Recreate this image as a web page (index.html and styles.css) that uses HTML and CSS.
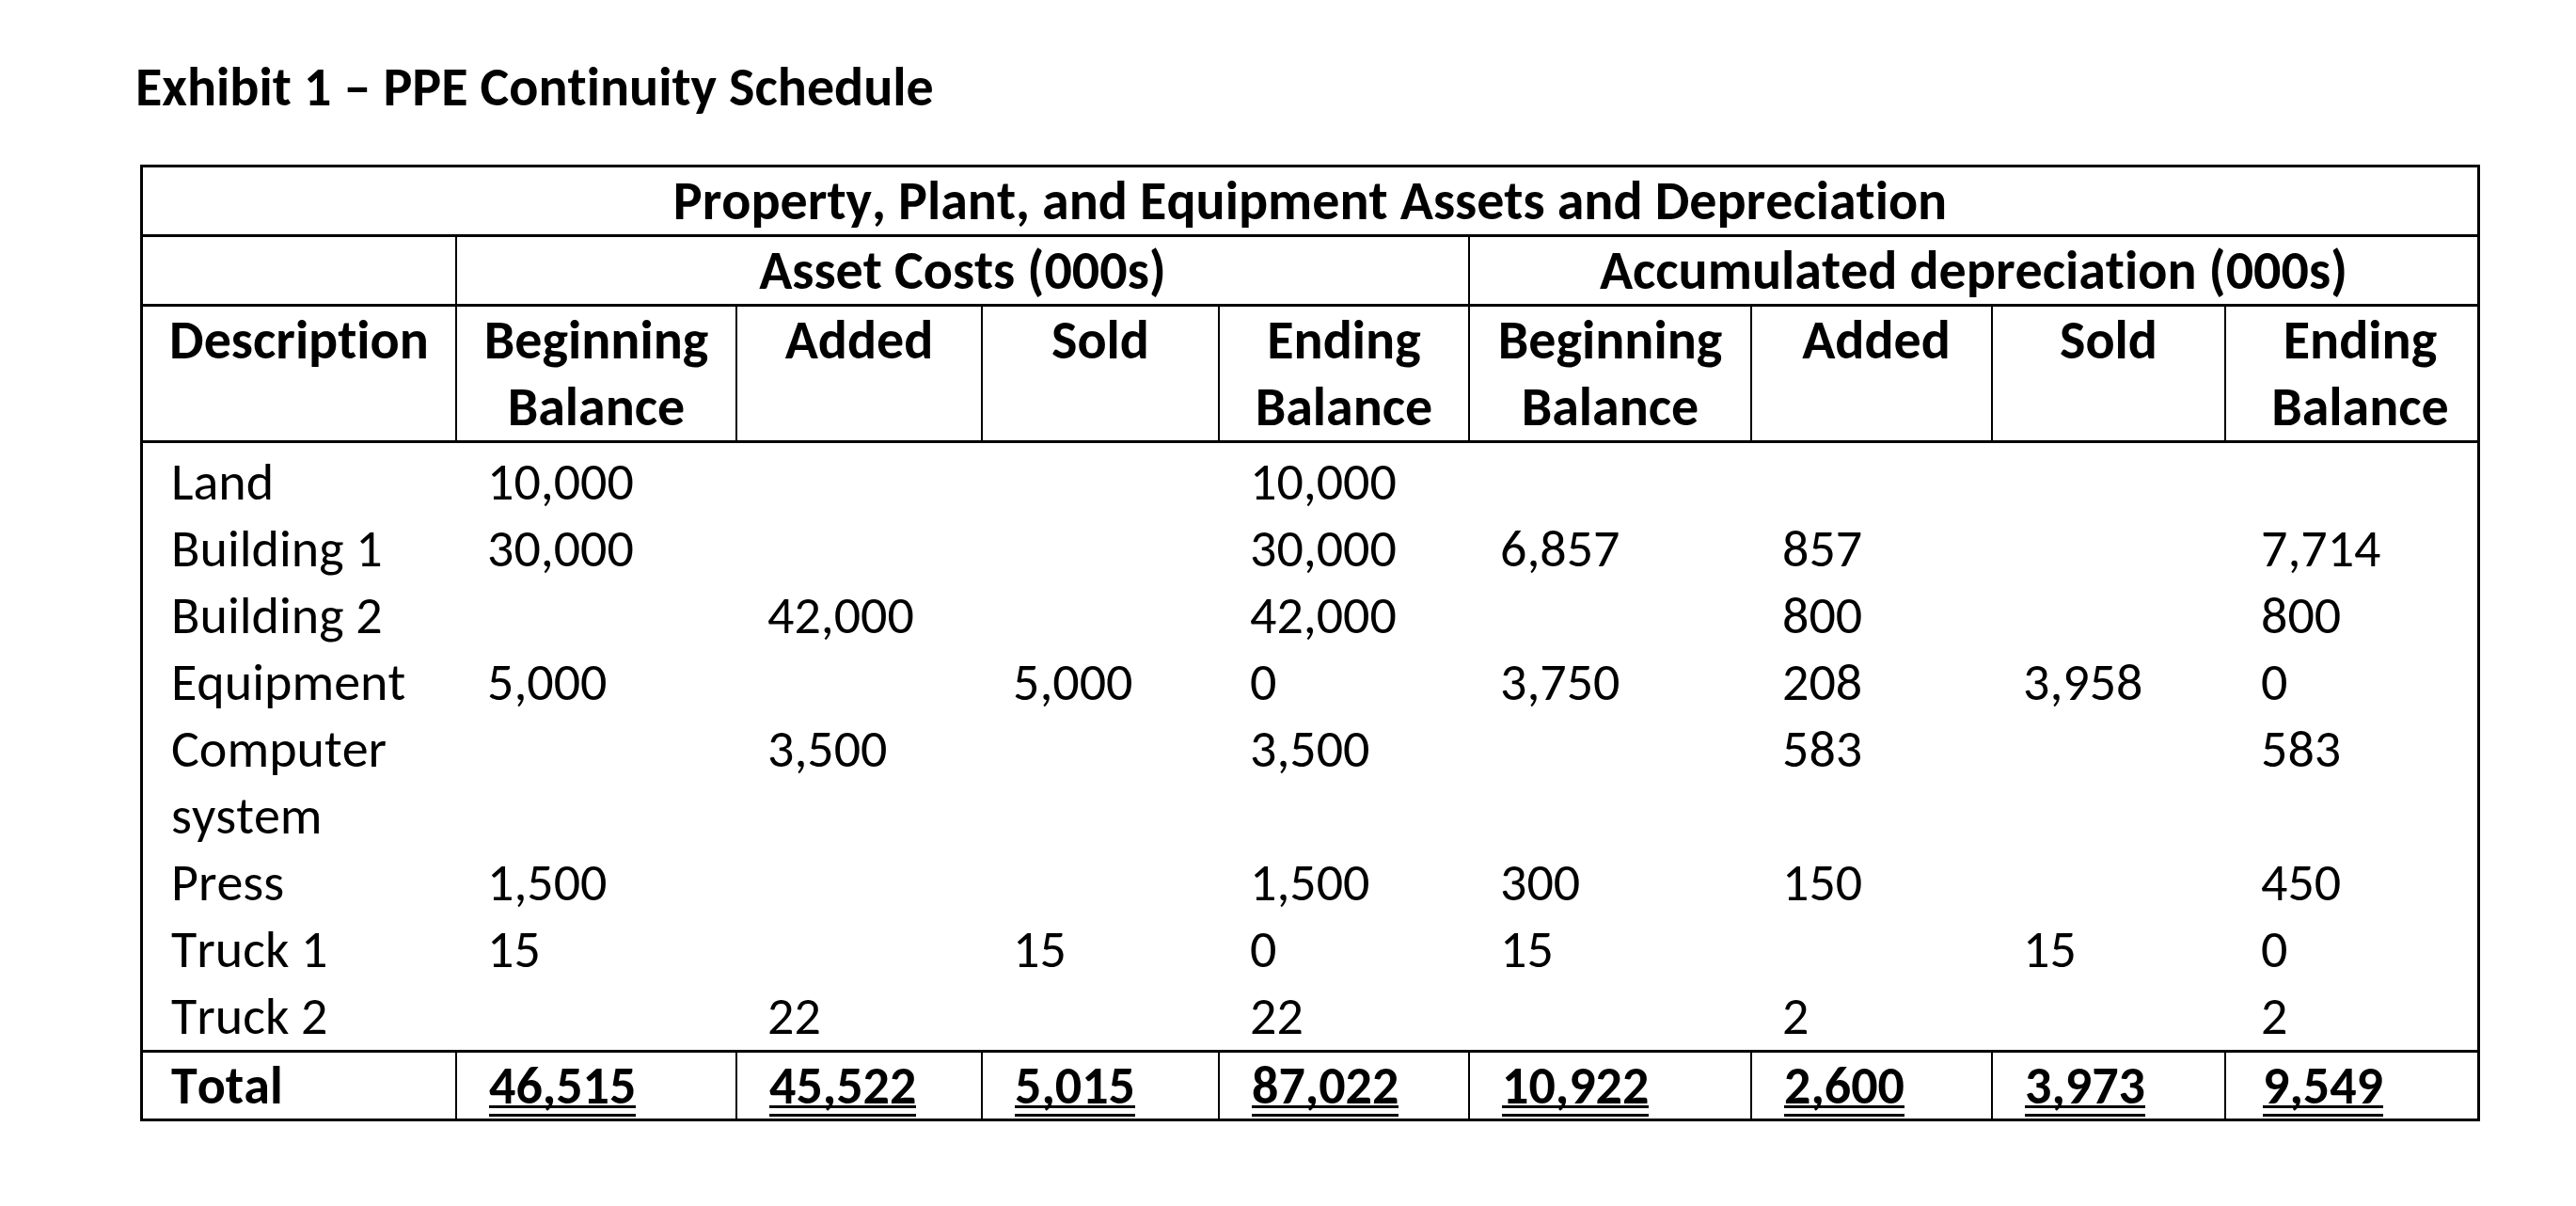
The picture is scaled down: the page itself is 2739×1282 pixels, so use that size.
FILE: index.html
```html
<!DOCTYPE html>
<html lang="en">
<head>
<meta charset="utf-8">
<title>Exhibit 1 – PPE Continuity Schedule</title>
<link rel="stylesheet" href="styles.css">
</head>
<body>
<div class="page">
  <h1 class="title">Exhibit 1 – PPE Continuity Schedule</h1>
  <table class="ppe">
    <colgroup>
      <col class="c-desc">
      <col class="c-ab">
      <col class="c-aa">
      <col class="c-as">
      <col class="c-ae">
      <col class="c-db">
      <col class="c-da">
      <col class="c-ds">
      <col class="c-de">
    </colgroup>
    <thead>
      <tr class="hr1">
        <th colspan="9">Property, Plant, and Equipment Assets and Depreciation</th>
      </tr>
      <tr class="hr2">
        <th></th>
        <th colspan="4">Asset Costs (000s)</th>
        <th colspan="4">Accumulated depreciation (000s)</th>
      </tr>
      <tr class="hr3">
        <th>Description</th>
        <th>Beginning<br>Balance</th>
        <th>Added</th>
        <th>Sold</th>
        <th>Ending<br>Balance</th>
        <th>Beginning<br>Balance</th>
        <th>Added</th>
        <th>Sold</th>
        <th>Ending<br>Balance</th>
      </tr>
    </thead>
    <tbody>
      <tr class="first">
        <td>Land</td><td>10,000</td><td></td><td></td><td>10,000</td><td></td><td></td><td></td><td></td>
      </tr>
      <tr>
        <td>Building 1</td><td>30,000</td><td></td><td></td><td>30,000</td><td>6,857</td><td>857</td><td></td><td>7,714</td>
      </tr>
      <tr>
        <td>Building 2</td><td></td><td>42,000</td><td></td><td>42,000</td><td></td><td>800</td><td></td><td>800</td>
      </tr>
      <tr>
        <td>Equipment</td><td>5,000</td><td></td><td>5,000</td><td>0</td><td>3,750</td><td>208</td><td>3,958</td><td>0</td>
      </tr>
      <tr>
        <td>Computer system</td><td></td><td>3,500</td><td></td><td>3,500</td><td></td><td>583</td><td></td><td>583</td>
      </tr>
      <tr>
        <td>Press</td><td>1,500</td><td></td><td></td><td>1,500</td><td>300</td><td>150</td><td></td><td>450</td>
      </tr>
      <tr>
        <td>Truck 1</td><td>15</td><td></td><td>15</td><td>0</td><td>15</td><td></td><td>15</td><td>0</td>
      </tr>
      <tr>
        <td>Truck 2</td><td></td><td>22</td><td></td><td>22</td><td></td><td>2</td><td></td><td>2</td>
      </tr>
    </tbody>
    <tfoot>
      <tr>
        <td>Total</td>
        <td><span class="dbl">46,515</span></td>
        <td><span class="dbl">45,522</span></td>
        <td><span class="dbl">5,015</span></td>
        <td><span class="dbl">87,022</span></td>
        <td><span class="dbl">10,922</span></td>
        <td><span class="dbl">2,600</span></td>
        <td><span class="dbl">3,973</span></td>
        <td><span class="dbl">9,549</span></td>
      </tr>
    </tfoot>
  </table>
</div>
</body>
</html>
```

FILE: styles.css
```css
html, body {
  margin: 0;
  padding: 0;
  background: #ffffff;
}

body {
  color: #000000;
  font-family: "Carlito", "Lato", sans-serif;
  font-size: 56px;
  font-kerning: none;
  font-variant-ligatures: none;
}

.page {
  padding: 57px 0 0 149px;
}

.title {
  margin: 0 0 47px -5px;
  font-size: 58px;
  line-height: 71px;
  font-weight: 700;
}

.ppe {
  box-sizing: border-box;
  width: 2488px;
  table-layout: fixed;
  border-collapse: separate;
  border-spacing: 0;
  border: 3px solid #000000;
}

.c-desc { width: 332px; }
.c-ab { width: 298px; }
.c-aa { width: 261px; }
.c-as { width: 252px; }
.c-ae { width: 266px; }
.c-db { width: 300px; }
.c-da { width: 256px; }
.c-ds { width: 248px; }
.c-de { width: 269px; }

.ppe th,
.ppe td {
  box-sizing: border-box;
  padding: 0;
  line-height: 71px;
  vertical-align: top;
  white-space: normal;
}

.ppe th {
  font-size: 58px;
  font-weight: 700;
  text-align: center;
  padding: 0 4px;
  border-bottom: 3px solid #000000;
}

.hr3 th:last-child {
  padding-left: 22px;
}

.hr3 th:nth-child(7) {
  padding-left: 14px;
}

.hr2 th + th,
.hr3 th + th {
  border-left: 2px solid #000000;
}

.ppe tbody td {
  text-align: left;
  font-weight: 400;
  padding: 0 8px 0 34px;
}

.ppe tbody td:first-child,
.ppe tfoot td:first-child {
  padding-left: 30px;
}

.ppe tbody td:last-child,
.ppe tfoot td:last-child {
  padding-left: 39px;
}

.ppe tbody tr.first td {
  padding-top: 6px;
}

.ppe tfoot td {
  text-align: left;
  font-weight: 700;
  line-height: 70px;
  padding: 0 8px 0 34px;
  border-top: 3px solid #000000;
}

.ppe tfoot td + td {
  border-left: 2px solid #000000;
}

.dbl {
  position: relative;
}

.dbl::after {
  content: "";
  position: absolute;
  left: 0;
  right: 0;
  top: 55px;
  height: 12px;
  box-sizing: border-box;
  border-top: 3px solid #000000;
  border-bottom: 3px solid #000000;
}
```
